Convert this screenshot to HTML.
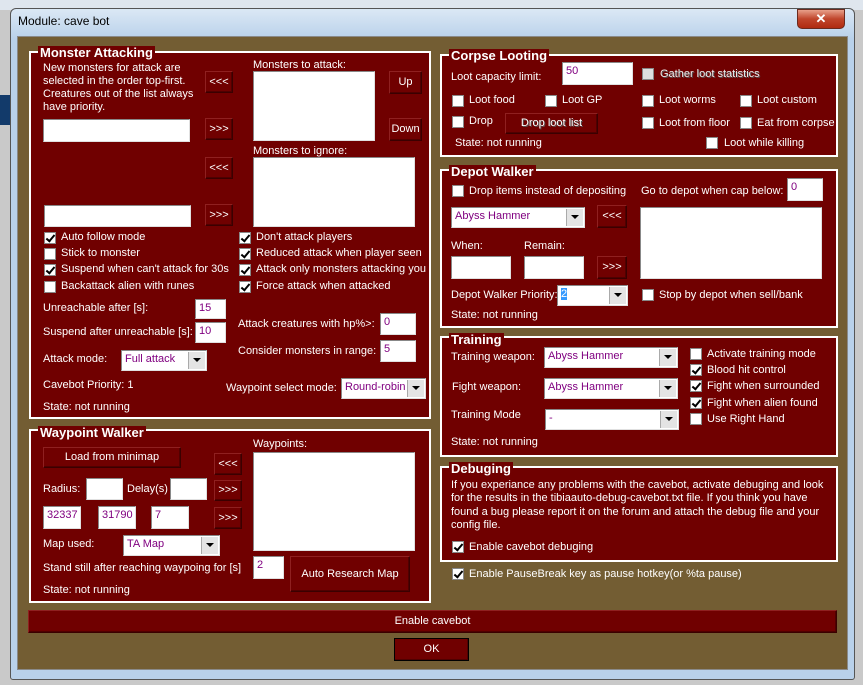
<!DOCTYPE html>
<html><head><meta charset="utf-8"><style>
*{box-sizing:border-box;margin:0;padding:0}
body{width:863px;height:685px;overflow:hidden;background:#c9c9c9;font-family:"Liberation Sans",sans-serif;font-size:11px;color:#fff;position:relative}
.a{position:absolute}
.t{position:absolute;white-space:nowrap;line-height:13px}
.win{left:10px;top:8px;width:845px;height:672px;background:linear-gradient(#dbe8f5,#b9d1ea 30px,#b9d1ea);border:1px solid #555;border-radius:6px 6px 3px 3px}
.client{left:17px;top:36px;width:831px;height:634px;background:#735d33;border:1px solid #8a8a8a}
.gb{position:absolute;background:#700000;border:2px solid #fff;}
.gt{position:absolute;font-weight:bold;font-size:13px;background:#700000;padding:0 2px;line-height:14px;color:#fff}
.btn{position:absolute;background:#700000;border:1px solid;border-color:#8f2020 #3a0000 #3a0000 #8f2020;box-shadow:inset -1px -1px 0 #500000;color:#fff;text-align:center;font-size:11px}
.in{position:absolute;background:#fff;border:1px solid;border-color:#888 #e0e0e0 #e0e0e0 #888;color:#800080;font-size:11px;padding-left:3px;line-height:17px}
.sel{position:absolute;background:#fff;border:1px solid;border-color:#888 #e0e0e0 #e0e0e0 #888;color:#800080;padding-left:3px;line-height:17px}
.sel:after{content:"";position:absolute;right:1px;top:1px;bottom:1px;width:16px;background:#e4e4e4 ;border-left:1px solid #aaa}
.sel i{position:absolute;right:5px;top:7px;width:0;height:0;border-left:4px solid transparent;border-right:4px solid transparent;border-top:4px solid #000;z-index:2}
.cb{position:absolute;width:12px;height:12px;background:#fff;border:1px solid #888}
.cb.c:after{content:"";position:absolute;left:3px;top:0px;width:3px;height:7px;border:solid #000;border-width:0 2px 2px 0;transform:rotate(40deg)}
</style></head><body>
<div class="a" style="left:0;top:0;width:863px;height:10px;background:#dfe6ee"></div>
<div class="a" style="left:0;top:95px;width:10px;height:30px;background:#123a6a"></div>
<div class="a win"></div>
<div class="t" style="left:18px;top:15px;color:#000;font-size:12px">Module: cave bot</div>
<div class="a" style="left:797px;top:9px;width:48px;height:20px;background:linear-gradient(#e8a08a,#c0452b 50%,#b02a10);border:1px solid #6b2a1e;border-radius:0 0 5px 5px;color:#fff;text-align:center;font-weight:bold;font-size:13px;line-height:18px">✕</div>
<div class="a client"></div>

<!-- Monster Attacking -->
<div class="gb" style="left:29px;top:51px;width:402px;height:368px"></div>
<div class="gt" style="left:38px;top:46px">Monster Attacking</div>
<div class="t" style="left:43px;top:62px;line-height:13px">New monsters for attack are<br>selected in the order top-first.<br>Creatures out of the list always<br>have priority.</div>
<div class="btn" style="left:205px;top:71px;width:28px;height:22px;line-height:20px">&lt;&lt;&lt;</div>
<div class="btn" style="left:205px;top:118px;width:28px;height:22px;line-height:20px">&gt;&gt;&gt;</div>
<div class="btn" style="left:205px;top:157px;width:28px;height:22px;line-height:20px">&lt;&lt;&lt;</div>
<div class="btn" style="left:205px;top:204px;width:28px;height:22px;line-height:20px">&gt;&gt;&gt;</div>
<div class="in" style="left:43px;top:119px;width:147px;height:23px"></div>
<div class="in" style="left:44px;top:205px;width:147px;height:22px"></div>
<div class="t" style="left:253px;top:59px">Monsters to attack:</div>
<div class="in" style="left:253px;top:71px;width:122px;height:70px"></div>
<div class="btn" style="left:389px;top:71px;width:33px;height:23px;line-height:21px">Up</div>
<div class="btn" style="left:389px;top:118px;width:33px;height:23px;line-height:21px">Down</div>
<div class="t" style="left:253px;top:145px">Monsters to ignore:</div>
<div class="in" style="left:253px;top:157px;width:162px;height:70px"></div>
<div class="cb c" style="left:44px;top:232px"></div><div class="t" style="left:61px;top:231px">Auto follow mode</div>
<div class="cb" style="left:44px;top:248px"></div><div class="t" style="left:61px;top:247px">Stick to monster</div>
<div class="cb c" style="left:44px;top:264px"></div><div class="t" style="left:61px;top:263px">Suspend when can't attack for 30s</div>
<div class="cb" style="left:44px;top:281px"></div><div class="t" style="left:61px;top:280px">Backattack alien with runes</div>
<div class="cb c" style="left:239px;top:232px"></div><div class="t" style="left:256px;top:231px">Don't attack players</div>
<div class="cb c" style="left:239px;top:248px"></div><div class="t" style="left:256px;top:247px">Reduced attack when player seen</div>
<div class="cb c" style="left:239px;top:264px"></div><div class="t" style="left:256px;top:263px">Attack only monsters attacking you</div>
<div class="cb c" style="left:239px;top:281px"></div><div class="t" style="left:256px;top:280px">Force attack when attacked</div>
<div class="t" style="left:43px;top:302px">Unreachable after [s]:</div>
<div class="in" style="left:195px;top:299px;width:31px;height:20px">15</div>
<div class="t" style="left:43px;top:326px">Suspend after unreachable [s]:</div>
<div class="in" style="left:195px;top:322px;width:31px;height:21px">10</div>
<div class="t" style="left:43px;top:353px">Attack mode:</div>
<div class="sel" style="left:121px;top:350px;width:86px;height:21px">Full attack<i></i></div>
<div class="t" style="left:238px;top:318px">Attack creatures with hp%&gt;:</div>
<div class="in" style="left:380px;top:313px;width:36px;height:22px">0</div>
<div class="t" style="left:238px;top:345px">Consider monsters in range:</div>
<div class="in" style="left:380px;top:340px;width:36px;height:22px">5</div>
<div class="t" style="left:43px;top:379px">Cavebot Priority: 1</div>
<div class="t" style="left:226px;top:382px">Waypoint select mode:</div>
<div class="sel" style="left:341px;top:378px;width:85px;height:21px">Round-robin<i></i></div>
<div class="t" style="left:43px;top:401px">State: not running</div>

<!-- Waypoint Walker -->
<div class="gb" style="left:29px;top:429px;width:402px;height:174px"></div>
<div class="gt" style="left:38px;top:426px">Waypoint Walker</div>
<div class="btn" style="left:43px;top:447px;width:138px;height:21px;line-height:19px">Load from minimap</div>
<div class="btn" style="left:214px;top:453px;width:28px;height:22px;line-height:20px">&lt;&lt;&lt;</div>
<div class="btn" style="left:214px;top:480px;width:28px;height:21px;line-height:19px">&gt;&gt;&gt;</div>
<div class="btn" style="left:214px;top:507px;width:28px;height:22px;line-height:20px">&gt;&gt;&gt;</div>
<div class="t" style="left:253px;top:438px">Waypoints:</div>
<div class="in" style="left:253px;top:452px;width:162px;height:99px"></div>
<div class="t" style="left:43px;top:483px">Radius:</div>
<div class="in" style="left:86px;top:478px;width:37px;height:22px"></div>
<div class="t" style="left:127px;top:483px">Delay(s)</div>
<div class="in" style="left:170px;top:478px;width:37px;height:22px"></div>
<div class="in" style="left:43px;top:506px;width:38px;height:23px">32337</div>
<div class="in" style="left:98px;top:506px;width:38px;height:23px">31790</div>
<div class="in" style="left:151px;top:506px;width:38px;height:23px">7</div>
<div class="t" style="left:43px;top:538px">Map used:</div>
<div class="sel" style="left:123px;top:535px;width:97px;height:21px">TA Map<i></i></div>
<div class="t" style="left:43px;top:562px">Stand still after reaching waypoing for [s]</div>
<div class="in" style="left:253px;top:556px;width:31px;height:23px">2</div>
<div class="btn" style="left:290px;top:556px;width:120px;height:36px;line-height:34px">Auto Research Map</div>
<div class="t" style="left:43px;top:584px">State: not running</div>

<!-- Corpse Looting -->
<div class="gb" style="left:440px;top:54px;width:398px;height:103px"></div>
<div class="gt" style="left:449px;top:49px">Corpse Looting</div>
<div class="t" style="left:451px;top:71px">Loot capacity limit:</div>
<div class="in" style="left:562px;top:62px;width:71px;height:23px">50</div>
<div class="cb" style="left:642px;top:68px;background:#ddd"></div><div class="t" style="left:660px;top:68px;color:#eee;text-shadow:1px 1px 0 #555">Gather loot statistics</div>
<div class="cb" style="left:452px;top:95px"></div><div class="t" style="left:469px;top:94px">Loot food</div>
<div class="cb" style="left:545px;top:95px"></div><div class="t" style="left:562px;top:94px">Loot GP</div>
<div class="cb" style="left:642px;top:95px"></div><div class="t" style="left:659px;top:94px">Loot worms</div>
<div class="cb" style="left:740px;top:95px"></div><div class="t" style="left:757px;top:94px">Loot custom</div>
<div class="cb" style="left:452px;top:116px"></div><div class="t" style="left:469px;top:115px">Drop</div>
<div class="btn" style="left:505px;top:113px;width:93px;height:21px;line-height:19px;text-shadow:1px 1px 0 #555">Drop loot list</div>
<div class="cb" style="left:642px;top:117px"></div><div class="t" style="left:659px;top:117px">Loot from floor</div>
<div class="cb" style="left:740px;top:117px"></div><div class="t" style="left:757px;top:117px">Eat from corpse</div>
<div class="t" style="left:455px;top:137px">State: not running</div>
<div class="cb" style="left:706px;top:137px"></div><div class="t" style="left:724px;top:137px">Loot while killing</div>

<!-- Depot Walker -->
<div class="gb" style="left:440px;top:169px;width:398px;height:159px"></div>
<div class="gt" style="left:449px;top:165px">Depot Walker</div>
<div class="cb" style="left:452px;top:185px"></div><div class="t" style="left:469px;top:185px">Drop items instead of depositing</div>
<div class="t" style="left:641px;top:185px">Go to depot when cap below:</div>
<div class="in" style="left:787px;top:178px;width:36px;height:23px">0</div>
<div class="sel" style="left:451px;top:207px;width:134px;height:21px">Abyss Hammer<i></i></div>
<div class="btn" style="left:597px;top:205px;width:30px;height:23px;line-height:21px">&lt;&lt;&lt;</div>
<div class="in" style="left:640px;top:207px;width:182px;height:72px"></div>
<div class="t" style="left:451px;top:240px">When:</div>
<div class="t" style="left:524px;top:240px">Remain:</div>
<div class="in" style="left:451px;top:256px;width:60px;height:23px"></div>
<div class="in" style="left:524px;top:256px;width:60px;height:23px"></div>
<div class="btn" style="left:597px;top:256px;width:30px;height:23px;line-height:21px">&gt;&gt;&gt;</div>
<div class="t" style="left:451px;top:289px">Depot Walker Priority:</div>
<div class="sel" style="left:557px;top:285px;width:71px;height:21px"><span style="background:#3399ff;color:#fff">2</span><i></i></div>
<div class="cb" style="left:642px;top:289px"></div><div class="t" style="left:659px;top:289px">Stop by depot when sell/bank</div>
<div class="t" style="left:451px;top:309px">State: not running</div>

<!-- Training -->
<div class="gb" style="left:440px;top:336px;width:398px;height:121px"></div>
<div class="gt" style="left:449px;top:333px">Training</div>
<div class="t" style="left:451px;top:351px">Training weapon:</div>
<div class="sel" style="left:544px;top:347px;width:134px;height:21px">Abyss Hammer<i></i></div>
<div class="t" style="left:452px;top:381px">Fight weapon:</div>
<div class="sel" style="left:544px;top:378px;width:134px;height:21px">Abyss Hammer<i></i></div>
<div class="t" style="left:451px;top:409px">Training Mode</div>
<div class="sel" style="left:545px;top:409px;width:134px;height:21px">-<i></i></div>
<div class="cb" style="left:690px;top:348px"></div><div class="t" style="left:707px;top:348px">Activate training mode</div>
<div class="cb c" style="left:690px;top:364px"></div><div class="t" style="left:707px;top:364px">Blood hit control</div>
<div class="cb c" style="left:690px;top:380px"></div><div class="t" style="left:707px;top:380px">Fight when surrounded</div>
<div class="cb c" style="left:690px;top:397px"></div><div class="t" style="left:707px;top:397px">Fight when alien found</div>
<div class="cb" style="left:690px;top:413px"></div><div class="t" style="left:707px;top:413px">Use Right Hand</div>
<div class="t" style="left:451px;top:436px">State: not running</div>

<!-- Debuging -->
<div class="gb" style="left:440px;top:466px;width:398px;height:96px"></div>
<div class="gt" style="left:449px;top:462px">Debuging</div>
<div class="t" style="left:451px;top:479px;line-height:13.3px">If you experiance any problems with the cavebot, activate debuging and look<br>for the results in the tibiaauto-debug-cavebot.txt file. If you think you have<br>found a bug please report it on the forum and attach the debug file and your<br>config file.</div>
<div class="cb c" style="left:452px;top:541px"></div><div class="t" style="left:469px;top:541px">Enable cavebot debuging</div>
<div class="cb c" style="left:452px;top:568px"></div><div class="t" style="left:469px;top:568px">Enable PauseBreak key as pause hotkey(or %ta pause)</div>

<div class="btn" style="left:28px;top:610px;width:809px;height:23px;line-height:21px">Enable cavebot</div>
<div class="btn" style="left:394px;top:638px;width:75px;height:23px;line-height:21px;border-color:#000">OK</div>
</body></html>
